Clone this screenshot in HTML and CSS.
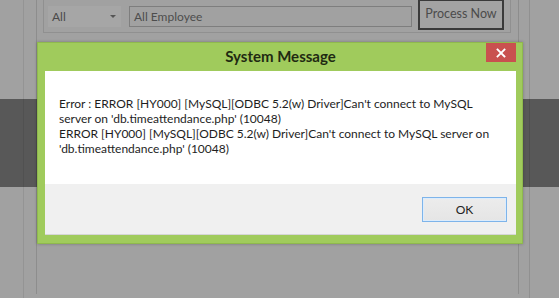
FILE: index.html
```html
<!DOCTYPE html>
<html>
<head>
<meta charset="utf-8">
<link rel="stylesheet" href="styles.css">
</head>
<body>
<div class="app">
  <div class="rail-outer">
    <div class="rail-inner">
      <div class="toolbar">
        <div class="select"><span>All</span><span class="caret"></span></div>
        <div class="textbox">All Employee</div>
        <div class="btn-process">Process Now</div>
      </div>
    </div>
  </div>

  <div class="dialog">
    <div class="dialog-title">
      <span>System Message</span>
      <div class="close">
        <svg width="10" height="10" viewBox="0 0 10 10"><path d="M1.5 1.5 L8.5 8.5 M8.5 1.5 L1.5 8.5" stroke="#fff" stroke-width="1.8" stroke-linecap="square"/></svg>
      </div>
    </div>
    <div class="dialog-body">
      <p>Error : ERROR [HY000] [MySQL][ODBC 5.2(w) Driver]Can't connect to MySQL<br>server on 'db.timeattendance.php' (10048)<br>ERROR [HY000] [MySQL][ODBC 5.2(w) Driver]Can't connect to MySQL server on<br>'db.timeattendance.php' (10048)</p>
    </div>
    <div class="dialog-footer">
      <div class="btn-ok">OK</div>
    </div>
  </div>
</div>
</body>
</html>
```

FILE: styles.css
```css
* { box-sizing: border-box; }
html, body { margin: 0; padding: 0; }
body {
  width: 559px;
  height: 298px;
  overflow: hidden;
  font-family: Lato, "Open Sans", sans-serif;
}
.app {
  position: relative;
  width: 559px;
  height: 298px;
  background: linear-gradient(to bottom, #a1a1a1 0, #a1a1a1 99px, #585858 99px, #585858 187px, #a1a1a1 187px);
  display: flex;
}
.rail-outer {
  margin-left: 23px;
  width: 507px;
  height: 100%;
  border-left: 1px solid rgba(0,0,0,0.08);
  border-right: 1px solid rgba(0,0,0,0.10);
  padding-left: 12px;
  padding-right: 10px;
}
.rail-inner {
  height: 100%;
  border-left: 1px solid rgba(0,0,0,0.12);
  border-right: 1px solid rgba(0,0,0,0.12);
  padding: 0 7px 0 6px;
}
.toolbar {
  height: 37px;
  margin-top: -4px;
  border: 1px solid rgba(0,0,0,0.10);
  border-top: none;
  display: flex;
  align-items: flex-start;
  padding: 0 5px 0 4px;
}
.select {
  margin-top: 10px;
  width: 73px;
  height: 21px;
  background: #a6a6a6;
  display: flex;
  align-items: center;
  justify-content: space-between;
  padding: 0 4px 0 4px;
  font-size: 12px;
  color: #4a4a4a;
}
.caret {
  width: 0; height: 0;
  border-left: 3px solid transparent;
  border-right: 3px solid transparent;
  border-top: 3px solid #555;
  margin-right: 1px;
}
.textbox {
  margin-top: 10px;
  margin-left: 8px;
  width: 283px;
  height: 21px;
  border: 1px solid #7e7e7e;
  font-size: 12px;
  color: #4d4d4d;
  padding: 2px 0 0 4px;
  line-height: 16px;
}
.btn-process {
  margin-left: 6px;
  margin-top: 3px;
  width: 86px;
  height: 31px;
  border: 2px solid #3a3a3a;
  background: #a3a3a3;
  font-size: 12.5px;
  color: #4b4b4b;
  display: flex;
  align-items: center;
  justify-content: center;
  padding-bottom: 2px;
}

.dialog {
  position: absolute;
  left: 37px;
  top: 42px;
  width: 486px;
  height: 202px;
  background: #a0cb5c;
  border: 1px solid #8fb94d;
  box-shadow: 0 0 3px rgba(0,0,0,0.25);
  display: flex;
  flex-direction: column;
  padding: 0 6px 8px 7px;
}
.dialog-title {
  height: 28px;
  display: flex;
  align-items: center;
  justify-content: center;
  position: relative;
  font-size: 15px;
  font-weight: bold;
  color: #1f2a12;
  padding-bottom: 2px;
}
.close {
  position: absolute;
  right: 0px;
  top: 0px;
  width: 30px;
  height: 19px;
  background: #c9514f;
  display: flex;
  align-items: center;
  justify-content: center;
}
.dialog-body {
  background: #ffffff;
  height: 113px;
  padding: 25px 0 0 14px;
}
.dialog-body p {
  margin: 0;
  font-size: 12px;
  line-height: 15px;
  color: #1e1e1e;
}
.dialog-footer {
  flex: 1;
  background: #f0f0f0;
  border-bottom: 1px solid #d6d6d6;
  display: flex;
  justify-content: flex-end;
  align-items: flex-start;
  padding: 13px 9px 0 0;
}
.btn-ok {
  width: 85px;
  height: 25px;
  border: 1px solid #7eb4ea;
  background: linear-gradient(#ececec, #e5e5e5);
  box-shadow: inset 0 0 0 1px #dcecfc;
  font-size: 12px;
  color: #222;
  display: flex;
  align-items: center;
  justify-content: center;
}
```
